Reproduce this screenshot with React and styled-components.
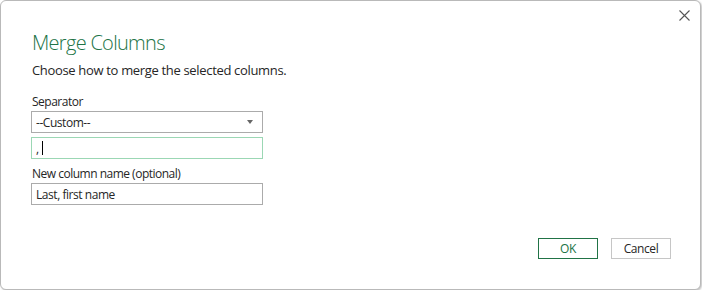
import React from "react";
import styled, { createGlobalStyle } from "styled-components";

const Global = createGlobalStyle`
  html, body { margin: 0; padding: 0; background: #ffffff; }
  body { font-family: "Open Sans", "Noto Sans", sans-serif; }
  * { box-sizing: border-box; }
`;

const Dialog = styled.div`
  position: relative;
  width: 701px;
  height: 290px;
  background: #ffffff;
  border: 1px solid #b9b9b9;
  border-radius: 6px;
  box-shadow: 1px 1px 2px rgba(0, 0, 0, 0.25);
  padding: 29px 0 0 31px;
  display: flex;
  flex-direction: column;
`;

const Close = styled.button`
  position: absolute;
  top: 6px;
  right: 8px;
  width: 16px;
  height: 16px;
  padding: 0;
  border: none;
  background: transparent;
  display: flex;
  align-items: center;
  justify-content: center;
`;

const Title = styled.h1`
  margin: 0;
  font-size: 20px;
  font-weight: 300;
  letter-spacing: -0.7px;
  color: #217346;
  line-height: 26px;
`;

const Description = styled.p`
  margin: 5px 0 0 0;
  font-size: 13px;
  letter-spacing: -0.33px;
  color: #262626;
  line-height: 18px;
`;

const Form = styled.div`
  margin: 15px 0 0 -1px;
  width: 232px;
  display: flex;
  flex-direction: column;
`;

const Label = styled.label`
  font-size: 12px;
  letter-spacing: -0.5px;
  color: #262626;
  line-height: 16px;
  margin-top: ${(p) => p.$top || 0}px;
  margin-left: 1px;
  margin-bottom: 1px;
`;

const Field = styled.div`
  position: relative;
  height: 22px;
  border: 1px solid ${(p) => (p.$focus ? "#9bd7b4" : "#ababab")};
  margin-top: ${(p) => p.$top || 0}px;
  padding: 0 4px;
  display: flex;
  align-items: center;
  font-size: 12px;
  letter-spacing: -0.45px;
  color: #262626;
`;

const Caret = styled.span`
  display: inline-block;
  width: 1px;
  height: 14px;
  background: #000;
  margin-left: 3px;
`;

const Arrow = styled.span`
  position: absolute;
  right: 9px;
  top: 8px;
  width: 0;
  height: 0;
  border-left: 3px solid transparent;
  border-right: 3px solid transparent;
  border-top: 4px solid #666;
`;

const Footer = styled.div`
  margin-top: auto;
  margin-bottom: 30px;
  margin-right: 29px;
  display: flex;
  justify-content: flex-end;
  gap: 13px;
`;

const Button = styled.button`
  width: 60px;
  height: 21px;
  padding: 0;
  background: #ffffff;
  border: 1px solid ${(p) => (p.$primary ? "#217346" : "#c6c6c6")};
  font-family: inherit;
  font-size: 12px;
  letter-spacing: -0.4px;
  color: ${(p) => (p.$primary ? "#217346" : "#262626")};
  line-height: 19px;
`;

export default function App() {
  return (
    <>
      <Global />
      <Dialog>
        <Close aria-label="Close">
          <svg width="11" height="11" viewBox="0 0 11 11">
            <path d="M0.5 0.5 L10.5 10.5 M10.5 0.5 L0.5 10.5" stroke="#555" strokeWidth="1.1" />
          </svg>
        </Close>
        <Title>Merge Columns</Title>
        <Description>Choose how to merge the selected columns.</Description>
        <Form>
          <Label>Separator</Label>
          <Field>
            --Custom--
            <Arrow />
          </Field>
          <Field $focus $top={4}>
            ,<Caret />
          </Field>
          <Label $top={7}>New column name (optional)</Label>
          <Field>Last, first name</Field>
        </Form>
        <Footer>
          <Button $primary>OK</Button>
          <Button>Cancel</Button>
        </Footer>
      </Dialog>
    </>
  );
}
